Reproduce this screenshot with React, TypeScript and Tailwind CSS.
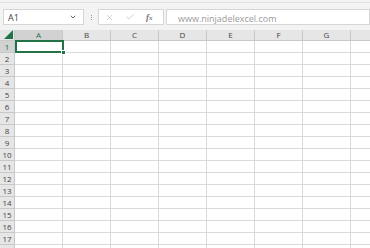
import { X, Check, ChevronDown } from 'lucide-react';

const COLS = ['A', 'B', 'C', 'D', 'E', 'F', 'G', 'H'];
const ROWS = Array.from({ length: 18 }, (_, i) => i + 1);

export default function App() {
  return (
    <div
      className="w-[370px] h-[248px] overflow-hidden bg-white flex flex-col"
      style={{ fontFamily: '"Open Sans", "Liberation Sans", sans-serif' }}
    >
      {/* ribbon edge */}
      <div className="h-[3px] shrink-0 bg-[#f3f3f3] border-b border-[#e1e1e1]" />

      {/* formula bar */}
      <div className="h-[27px] shrink-0 bg-[#f3f3f3] flex items-start pt-[6px] pl-[3px]">
        <div className="w-[81px] h-[16px] bg-white border border-[#d6d6d6] flex items-center justify-between pl-[4px] pr-[6px]">
          <span className="text-[9px] text-[#444] leading-none">A1</span>
          <ChevronDown size={8} strokeWidth={3} className="text-[#666]" />
        </div>
        <div className="w-[14px] h-[16px] flex flex-col items-center justify-center gap-[1px]">
          <span className="w-[1px] h-[1px] bg-[#9a9a9a]" />
          <span className="w-[1px] h-[1px] bg-[#9a9a9a]" />
          <span className="w-[1px] h-[1px] bg-[#9a9a9a]" />
        </div>
        <div className="w-[66px] h-[16px] bg-white border border-[#d6d6d6] flex items-center pl-[6px] gap-[11px] text-[#b2b2b2]">
          <X size={9} strokeWidth={1.5} />
          <Check size={10} strokeWidth={1.5} />
          <span className="text-[9px] italic font-semibold text-[#777] leading-none" style={{ fontFamily: '"Liberation Serif", serif' }}>
            f<span className="text-[7px]">x</span>
          </span>
        </div>
        <div className="flex-1 h-[16px] ml-[2px] bg-white border border-[#d6d6d6] flex items-end pl-[11px] pb-[1px]">
          <span className="text-[9px] text-[#9a9a9a] leading-none">www.ninjadelexcel.com</span>
        </div>
      </div>

      {/* column headers */}
      <div className="flex h-[11px] shrink-0 bg-[#e6e6e6] border-b border-[#c8c8c8]">
        <div className="w-[15px] shrink-0 relative border-r border-[#c8c8c8]">
          <svg className="absolute right-[1px] bottom-[1px]" width="9" height="9" viewBox="0 0 9 9">
            <polygon points="9,0 9,9 0,9" fill="#217346" />
          </svg>
        </div>
        {COLS.map((c) => (
          <div
            key={c}
            className={`w-[48px] shrink-0 border-r border-[#c8c8c8] text-[8px] leading-[10px] text-center ${
              c === 'A' ? 'bg-[#d2d2d2] text-[#217346]' : 'text-[#444]'
            }`}
          >
            {c === 'H' ? '' : c}
          </div>
        ))}
      </div>

      {/* rows */}
      <div className="relative flex flex-col">
        {ROWS.map((r) => (
          <div key={r} className="flex h-[12px] shrink-0">
            <div
              className={`w-[15px] shrink-0 border-r border-b border-[#c8c8c8] text-[8px] leading-[11px] text-center ${
                r === 1 ? 'bg-[#d2d2d2] text-[#217346]' : 'bg-[#e6e6e6] text-[#444]'
              }`}
            >
              {r === 18 ? '' : r}
            </div>
            {COLS.map((c) => (
              <div key={c} className="w-[48px] shrink-0 border-r border-b border-[#dadada]" />
            ))}
          </div>
        ))}

        {/* active cell A1 */}
        <div className="absolute left-[15px] top-[-1px] w-[49px] h-[13px] border-2 border-[#217346]">
          <div className="absolute right-[-4px] bottom-[-4px] w-[5px] h-[5px] bg-[#217346] border border-white" />
        </div>
      </div>
    </div>
  );
}
